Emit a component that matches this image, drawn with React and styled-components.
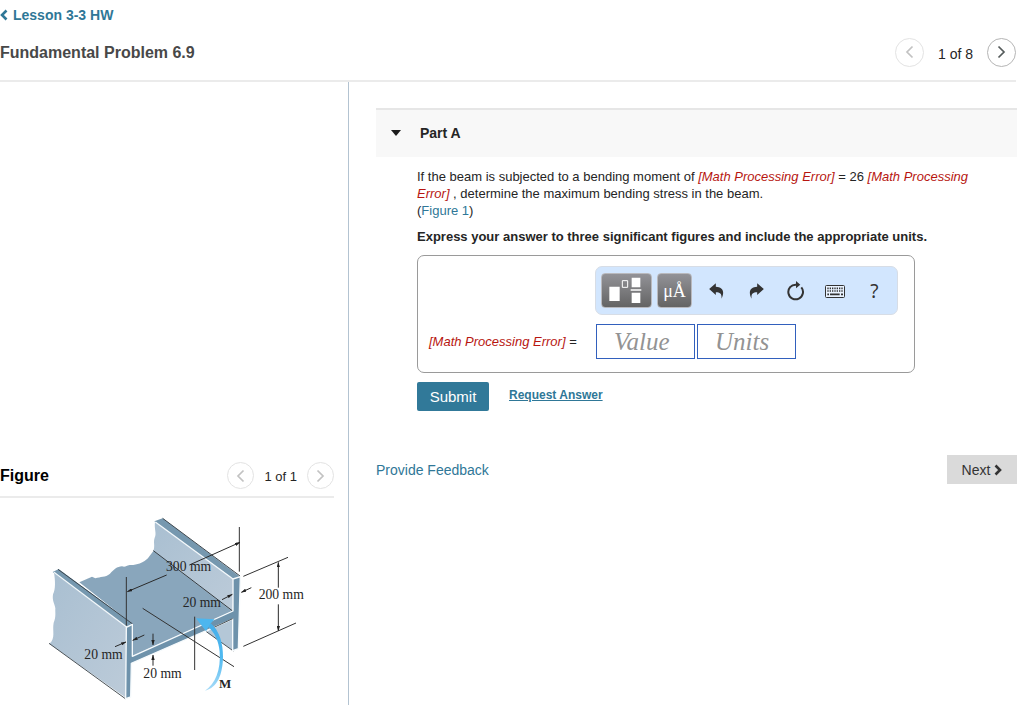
import React from "react";
import styled, { createGlobalStyle } from "styled-components";

const GlobalStyle = createGlobalStyle`
  * { box-sizing: border-box; }
  body {
    margin: 0;
    background: #fff;
    color: #252525;
    font-family: "Liberation Sans", Arial, sans-serif;
    font-size: 13px;
    line-height: 16px;
  }
  button, input { font: inherit; }
  p, h1, h2 { margin: 0; }
`;

const Page = styled.div`
  min-height: 100vh;
  display: flex;
  flex-direction: column;
`;

const Header = styled.header`
  height: 82px;
  margin-right: 8px;
  padding-top: 6px;
  border-bottom: 2px solid #ebebeb;
`;

const BackLink = styled.a`
  display: flex;
  width: max-content;
  align-items: center;
  gap: 5px;
  color: #2f7797;
  font-size: 14px;
  font-weight: bold;
  line-height: 18px;
  text-decoration: none;
`;

const TitleRow = styled.div`
  display: flex;
  align-items: center;
  justify-content: space-between;
  height: 56px;
`;

const Title = styled.h1`
  padding-top: 2px;
  color: #484848;
  font-size: 16px;
  line-height: 20px;
`;

const Heading = styled.h2`
  color: ${(p) => (p.$black ? "#000" : "#252525")};
  font-size: ${(p) => (p.$black ? 16 : 14)}px;
  line-height: 20px;
`;

const Pager = styled.nav`
  display: flex;
  align-items: center;
  gap: ${(p) => (p.$small ? 10 : 14)}px;
  font-size: ${(p) => (p.$small ? 13 : 14)}px;
`;

const PageCount = styled.span`
  padding-top: 3px;
`;

const RoundButton = styled.button`
  display: flex;
  align-items: center;
  justify-content: center;
  width: ${(p) => (p.$small ? 27 : 29)}px;
  height: ${(p) => (p.$small ? 27 : 29)}px;
  padding: 0;
  border: 1px solid ${(p) => (p.$active ? "#b5b5b5" : "#e3e3e3")};
  border-radius: 50%;
  background: #fff;
  color: ${(p) => (p.$active ? "#555b5b" : "#c2c2c2")};
`;

const Columns = styled.main`
  flex: 1;
  display: grid;
  grid-template-columns: 349px minmax(0, 1fr);
`;

const FigurePane = styled.aside`
  display: flex;
  flex-direction: column;
  justify-content: flex-end;
  border-right: 1px solid #b3c3d1;
`;

const FigureHeader = styled.div`
  display: flex;
  align-items: center;
  justify-content: space-between;
  height: 42px;
  margin-right: 14px;
  padding-bottom: 1px;
  border-bottom: 2px solid #ebebeb;
`;

const FigureBody = styled.div`
  padding: 7px 0 0 30px;
  svg { display: block; }
`;

const ProblemPane = styled.section`
  padding: 26px 7px 16px 27px;
`;

const PartHeader = styled.div`
  display: flex;
  align-items: center;
  gap: 19px;
  height: 49px;
  padding: 0 0 2px 15px;
  border-top: 2px solid #e6e6e6;
  background: #f8f8f8;
`;

const PartContent = styled.div`
  display: flex;
  flex-direction: column;
  padding: 11px 16px 0 41px;
`;

const Prose = styled.p`
  line-height: 17px;
`;

const Instruction = styled.p`
  margin: 10px 0;
  font-weight: bold;
`;

const MathError = styled.em`
  color: #b71610;
`;

const TextLink = styled.a`
  color: #2f7797;
  font-size: ${(p) => (p.$size ? p.$size : 13)}px;
  font-weight: ${(p) => (p.$strong ? "bold" : "normal")};
  text-decoration: ${(p) => (p.$strong ? "underline" : "none")};
`;

const AnswerBox = styled.div`
  display: grid;
  grid-template-columns: 166px 1fr;
  align-items: center;
  row-gap: 9px;
  max-width: 498px;
  padding: 10px 16px 13px 11px;
  border: 1px solid #9a9a9a;
  border-radius: 7px;
`;

const Toolbar = styled.div`
  grid-column: 2;
  display: flex;
  align-items: center;
  height: 49px;
  padding: 0 3px 0 5px;
  border: 1px solid #d7dde6;
  border-radius: 7px;
  background: #d2e6fe;
`;

const PaletteButton = styled.button`
  display: flex;
  align-items: center;
  justify-content: center;
  width: ${(p) => (p.$wide ? 51 : 35)}px;
  height: 35px;
  margin-right: 5px;
  padding: 0;
  border: 1px solid #b9b9bd;
  border-radius: 4px;
  background: linear-gradient(#929297, #646464);
  color: #fff;
  font-family: "Liberation Serif", serif;
  font-size: 18px;
  line-height: 24px;
`;

const ToolButton = styled.button`
  display: flex;
  align-items: center;
  justify-content: center;
  flex: 1;
  height: 35px;
  padding: 0;
  border: 0;
  background: none;
  color: #333;
  font-family: "Noto Sans", sans-serif;
  font-size: 19px;
`;

const Fields = styled.div`
  display: flex;
  gap: 2px;
  padding-left: 1px;
`;

const Field = styled.input`
  width: 99px;
  height: 35px;
  padding: 0 17px;
  border: 1px solid #3260bd;
  background: #fff;
  font-family: "Liberation Serif", serif;
  font-size: 25px;
  font-style: italic;
  &::placeholder { color: #939393; opacity: 1; }
`;

const Actions = styled.div`
  display: flex;
  align-items: center;
  gap: 20px;
  margin-top: 9px;
  a { padding-bottom: 3px; }
`;

const SubmitButton = styled.button`
  width: 72px;
  height: 29px;
  padding: 0;
  border: 0;
  border-radius: 2px;
  background: #317999;
  color: #fff;
  font-size: 15px;
`;

const Footer = styled.div`
  display: flex;
  align-items: center;
  justify-content: space-between;
  margin-top: 44px;
`;

const NextButton = styled.button`
  display: flex;
  align-items: center;
  justify-content: center;
  gap: 4px;
  width: 70px;
  height: 29px;
  padding: 0;
  border: 0;
  background: #dadada;
  color: #333;
  font-size: 14px;
`;

function Chevron({ left, weight = 1.7 }) {
  return (
    <svg width="9" height="14" viewBox="0 0 9 14" fill="none" aria-hidden="true">
      <path d={left ? "M7.5 1.5L2 7l5.5 5.5" : "M1.5 1.5L7 7l-5.5 5.5"} stroke="currentColor" strokeWidth={weight} />
    </svg>
  );
}

function BoldChevron({ left }) {
  return (
    <svg width="8" height="12" viewBox="0 0 8 12" fill="none" aria-hidden="true">
      <path d={left ? "M6.5 1.5L2 6l4.5 4.5" : "M1.5 1.5L6 6l-4.5 4.5"} stroke="currentColor" strokeWidth="2.6" />
    </svg>
  );
}

function PagerNav({ small, label, nextActive, name }) {
  return (
    <Pager $small={small} aria-label={name}>
      <RoundButton $small={small} aria-label="Previous"><Chevron left /></RoundButton>
      <PageCount>{label}</PageCount>
      <RoundButton $small={small} $active={nextActive} aria-label="Next"><Chevron /></RoundButton>
    </Pager>
  );
}

function TemplateIcon() {
  return (
    <svg width="36" height="28" viewBox="0 0 108 84" aria-hidden="true">
      <path fill="#fff" d="M1 29h31v43H1zM68 2h26v29H68zM68 47h26v31H68zM65 37h32v4H65z" />
      <path fill="none" stroke="#fff" strokeWidth="3" d="M40 11h16v20H40z" />
    </svg>
  );
}

function UndoIcon() {
  return (
    <svg width="15" height="16" viewBox="0 0 44 48" aria-hidden="true">
      <path fill="#333" d="M0 18L20 1V11C40 12 48 25 37 47C38 33 34 28 20 28V36Z" />
    </svg>
  );
}

function RedoIcon() {
  return (
    <svg width="15" height="16" viewBox="0 0 44 48" aria-hidden="true">
      <path fill="#333" d="M44 18L24 1V11C4 12-4 25 7 47C6 33 10 28 24 28V36Z" />
    </svg>
  );
}

function ResetIcon() {
  return (
    <svg width="18" height="20" viewBox="0 0 54 60" aria-hidden="true">
      <path d="M43 19A22 22 0 1 1 27 11H31" fill="none" stroke="#333" strokeWidth="6" />
      <path d="M27 0L40 11L27 22Z" fill="#333" />
    </svg>
  );
}

function KeyboardIcon() {
  return (
    <svg width="20" height="15" viewBox="0 0 60 45" aria-hidden="true">
      <rect x="1.5" y="7.5" width="57" height="36" rx="3" fill="#eaf3ff" stroke="#333" strokeWidth="3" />
      <path d="M7 16h47M7 24h47" stroke="#333" strokeWidth="5" strokeDasharray="4 3" />
      <path d="M7 34h5M15 34h29M48 34h6" stroke="#333" strokeWidth="5" />
    </svg>
  );
}

function Arrow({ x1, y1, x2, y2 }) {
  return <line x1={x1} y1={y1} x2={x2} y2={y2} stroke="#2a2a2a" strokeWidth="3" markerEnd="url(#tip)" />;
}

function BeamFigure() {
  return (
    <svg width="290" height="200" viewBox="0 0 870 600" role="img" aria-label="I-beam cross section with bending moment M">
      <defs>
        <marker id="tip" viewBox="0 0 16 10" refX="15" refY="5" markerWidth="16" markerHeight="10" markerUnits="userSpaceOnUse" orient="auto">
          <path d="M0 0L16 5L0 10Z" fill="#222" />
        </marker>
        <linearGradient id="moment" x1="0" y1="1" x2="0" y2="0">
          <stop offset="0" stopColor="#a9dcf8" />
          <stop offset="0.5" stopColor="#4fb9f0" />
          <stop offset="1" stopColor="#45aeea" />
        </linearGradient>
        <linearGradient id="face" x1="0" y1="0" x2="1" y2="1">
          <stop offset="0" stopColor="#a9bfd1" />
          <stop offset="1" stopColor="#bccbd9" />
        </linearGradient>
      </defs>

      {/* web surface */}
      <path d="M148 232L186 215L196 220C212 214 225 218 240 206C250 195 262 184 276 184C287 188 288 181 299 180C330 180 350 166 357 155L372 136L608 318L306 454V356Z" fill="#89a6bc" />

      {/* far flange */}
      <path d="M375 50L610 222L608 320L370 138C376 120 369 112 374 98C381 86 372 72 375 50Z" fill="url(#face)" />
      <path d="M373 49L398 40L630 215L610 222Z" fill="#7698af" />
      <path d="M376 51L610 223" stroke="#f3f8fb" strokeWidth="4" fill="none" />
      <path d="M398 40L630 213" stroke="#3c454c" strokeWidth="3" />
      <path d="M370 137L608 318" stroke="#343b40" strokeWidth="3" />
      <path d="M529 380L610 342V437Z" fill="#b4c7d7" />
      <path d="M529 380L610 438" stroke="#4b5358" strokeWidth="3" />

      {/* near flange */}
      <path d="M72 202L290 366V580L58 416C78 400 66 376 71 353C79 336 75 322 76 310C74 295 66 290 69 268C77 252 76 230 72 202Z" fill="url(#face)" />
      <path d="M68 201L86 192L308 356L290 366Z" fill="#7698af" />
      <path d="M72 202L290 366" stroke="#f3f8fb" strokeWidth="4" />
      <path d="M84 193L308 357" stroke="#3c454c" strokeWidth="3" />
      <path d="M57 415L286 581" stroke="#4b5358" strokeWidth="3" />

      {/* cut section */}
      <path d="M289 367L307 358V454L609 318V222L631 215L625 431L608 437V342L304 475L302 576L287 581Z" fill="#6e92ab" stroke="#f6fafc" strokeWidth="4" strokeLinejoin="round" />
      <path d="M550 368L608 341" stroke="#4b5358" strokeWidth="3" />

      {/* extension lines and axes */}
      <path d="M289 216V362M628 66V200M640 214L774 157M640 424L798 354M338 310L612 485M494 335V495" stroke="#333" strokeWidth="3" />

      <Arrow x1="410" y1="210" x2="292" y2="260" />
      <Arrow x1="478" y1="180" x2="630" y2="112" />
      <Arrow x1="745" y1="248" x2="745" y2="172" />
      <Arrow x1="745" y1="298" x2="745" y2="378" />
      <Arrow x1="576" y1="284" x2="607" y2="268" />
      <Arrow x1="664" y1="248" x2="634" y2="262" />
      <Arrow x1="255" y1="425" x2="288" y2="411" />
      <Arrow x1="343" y1="390" x2="308" y2="406" />
      <Arrow x1="369" y1="386" x2="369" y2="420" />
      <Arrow x1="369" y1="482" x2="369" y2="450" />

      {/* moment arrow */}
      <path d="M525 557C556 536 573 495 569 440C566 408 554 382 532 364L542 355C569 378 579 415 579 455C578 508 563 547 525 557Z" fill="url(#moment)" />
      <path d="M498 340L554 343L541 356L528 379Z" fill="#4db6ee" />

      <g fill="#252525" fontFamily='"Liberation Serif", serif' fontSize="41">
        <text x="408" y="198">300 mm</text>
        <text x="686" y="282">200 mm</text>
        <text x="458" y="307">20 mm</text>
        <text x="163" y="462">20 mm</text>
        <text x="340" y="520">20 mm</text>
        <text x="567" y="550" fontWeight="bold" fontSize="39">M</text>
      </g>
    </svg>
  );
}

export default function App() {
  return (
    <Page>
      <GlobalStyle />
      <Header>
        <BackLink href="#lesson"><BoldChevron left />Lesson 3-3 HW</BackLink>
        <TitleRow>
          <Title>Fundamental Problem 6.9</Title>
          <PagerNav label="1 of 8" nextActive name="Problems" />
        </TitleRow>
      </Header>
      <Columns>
        <FigurePane>
          <FigureHeader>
            <Heading $black>Figure</Heading>
            <PagerNav small label="1 of 1" name="Figures" />
          </FigureHeader>
          <FigureBody><BeamFigure /></FigureBody>
        </FigurePane>
        <ProblemPane>
          <PartHeader>
            <svg width="10" height="6" viewBox="0 0 10 6" aria-hidden="true"><path d="M0 0h10L5 6Z" fill="#1c1c1c" /></svg>
            <Heading>Part A</Heading>
          </PartHeader>
          <PartContent>
            <Prose>
              If the beam is subjected to a bending moment of <MathError>[Math Processing Error]</MathError> = 26{" "}
              <MathError>[Math Processing Error]</MathError> , determine the maximum bending stress in the beam.
              <br />
              (<TextLink href="#figure-1">Figure 1</TextLink>)
            </Prose>
            <Instruction>Express your answer to three significant figures and include the appropriate units.</Instruction>
            <AnswerBox>
              <Toolbar role="toolbar" aria-label="Math tools">
                <PaletteButton $wide aria-label="Templates"><TemplateIcon /></PaletteButton>
                <PaletteButton aria-label="Symbols">μÅ</PaletteButton>
                <ToolButton aria-label="Undo"><UndoIcon /></ToolButton>
                <ToolButton aria-label="Redo"><RedoIcon /></ToolButton>
                <ToolButton aria-label="Reset"><ResetIcon /></ToolButton>
                <ToolButton aria-label="Keyboard shortcuts"><KeyboardIcon /></ToolButton>
                <ToolButton aria-label="Help">?</ToolButton>
              </Toolbar>
              <label htmlFor="value"><MathError>[Math Processing Error]</MathError> =</label>
              <Fields>
                <Field id="value" placeholder="Value" />
                <Field aria-label="Units" placeholder="Units" />
              </Fields>
            </AnswerBox>
            <Actions>
              <SubmitButton>Submit</SubmitButton>
              <TextLink href="#answer" $size={12} $strong>Request Answer</TextLink>
            </Actions>
          </PartContent>
          <Footer>
            <TextLink href="#feedback" $size={14}>Provide Feedback</TextLink>
            <NextButton>Next <BoldChevron /></NextButton>
          </Footer>
        </ProblemPane>
      </Columns>
    </Page>
  );
}
